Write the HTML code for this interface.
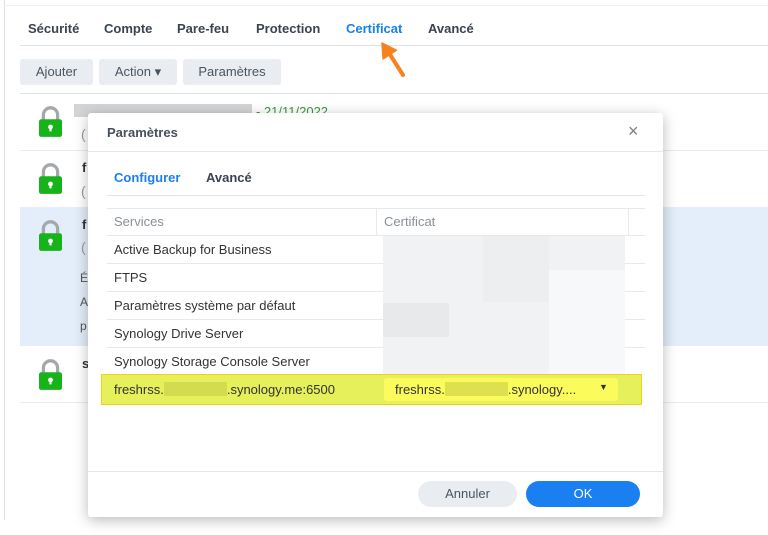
<!DOCTYPE html>
<html><head><meta charset="utf-8"><style>
*{box-sizing:border-box;margin:0;padding:0}
body{width:768px;height:535px;overflow:hidden;background:#fff;font-family:"Liberation Sans","DejaVu Sans",sans-serif;position:relative;color:#333}
.abs{position:absolute}
.tab{position:absolute;top:21px;font-size:13px;font-weight:bold;color:#3a4450}
.btn{position:absolute;top:59px;height:26px;background:#e9edf2;border-radius:3px;font-size:13px;color:#4a5460;line-height:26px;text-align:center}
.lock{position:absolute;left:39px;width:23px;height:31px}
.row{position:absolute;left:107px;width:538px;height:28px;border-bottom:1px solid #e6eaee;font-size:13px;color:#333;line-height:28px;padding-left:7px}
.par{position:absolute;left:81px;font-size:14px;color:#999}
</style></head><body>
<div class="abs" style="left:4px;top:0;width:1px;height:520px;background:#dde2e8"></div>
<div class="abs" style="left:4px;top:5px;width:764px;height:1px;background:#eef1f4"></div>
<div class="tab" style="left:28px">Sécurité</div>
<div class="tab" style="left:104px">Compte</div>
<div class="tab" style="left:177px">Pare-feu</div>
<div class="tab" style="left:256px">Protection</div>
<div class="tab" style="left:346px;color:#1a7ff0">Certificat</div>
<div class="tab" style="left:428px">Avancé</div>
<div class="abs" style="left:20px;top:45px;width:748px;height:1px;background:#dde3ea"></div>
<svg class="abs" style="left:376px;top:40px" width="34" height="40"><polygon points="6,3 20.3,10.2 7.1,19" fill="#f6821f" stroke="#f6821f" stroke-width="1.5" stroke-linejoin="round"/><line x1="13" y1="13" x2="27" y2="35" stroke="#f6821f" stroke-width="4" stroke-linecap="round"/></svg>
<div class="btn" style="left:20px;width:73px">Ajouter</div>
<div class="btn" style="left:99px;width:78px">Action ▾</div>
<div class="btn" style="left:183px;width:98px">Paramètres</div>
<div class="abs" style="left:20px;top:93px;width:748px;height:1px;background:#dde3ea"></div>
<div class="abs" style="left:20px;top:150px;width:748px;height:1px;background:#e8ecf0"></div>
<div class="abs" style="left:20px;top:207px;width:748px;height:139px;background:#e3eefa"></div>
<div class="abs" style="left:20px;top:402px;width:748px;height:1px;background:#e8ecf0"></div>
<div class="abs" style="left:74px;top:104px;width:178px;height:13px;background:#d2d4d6"></div>
<div class="abs" style="left:256px;top:104px;font-size:13px;color:#3a9a3a">- 21/11/2022</div>
<div class="par" style="top:126px">(</div>
<div class="par" style="top:183px">(</div>
<div class="par" style="top:239px">(</div>
<div class="abs" style="left:82px;top:160px;font-size:13px;font-weight:bold">f</div>
<div class="abs" style="left:82px;top:217px;font-size:13px;font-weight:bold">f</div>
<div class="abs" style="left:80px;top:266px;font-size:12px;color:#555;line-height:24px">É<br>A<br>p</div>
<div class="abs" style="left:82px;top:356px;font-size:13px;font-weight:bold">s</div>
<svg class="lock" style="top:106px" viewBox="0 0 21 28"><path d="M4 13 V8 a6.5 6.5 0 0 1 13 0 V13" fill="none" stroke="#a4a8ac" stroke-width="3"/><rect x="0" y="12" width="21" height="16" rx="2" fill="#17b31a"/><circle cx="10.5" cy="19" r="2.2" fill="#fff"/><rect x="9.5" y="19" width="2" height="4" fill="#fff"/></svg>
<svg class="lock" style="top:163px" viewBox="0 0 21 28"><path d="M4 13 V8 a6.5 6.5 0 0 1 13 0 V13" fill="none" stroke="#a4a8ac" stroke-width="3"/><rect x="0" y="12" width="21" height="16" rx="2" fill="#17b31a"/><circle cx="10.5" cy="19" r="2.2" fill="#fff"/><rect x="9.5" y="19" width="2" height="4" fill="#fff"/></svg>
<svg class="lock" style="top:220px" viewBox="0 0 21 28"><path d="M4 13 V8 a6.5 6.5 0 0 1 13 0 V13" fill="none" stroke="#a4a8ac" stroke-width="3"/><rect x="0" y="12" width="21" height="16" rx="2" fill="#17b31a"/><circle cx="10.5" cy="19" r="2.2" fill="#fff"/><rect x="9.5" y="19" width="2" height="4" fill="#fff"/></svg>
<svg class="lock" style="top:359px" viewBox="0 0 21 28"><path d="M4 13 V8 a6.5 6.5 0 0 1 13 0 V13" fill="none" stroke="#a4a8ac" stroke-width="3"/><rect x="0" y="12" width="21" height="16" rx="2" fill="#17b31a"/><circle cx="10.5" cy="19" r="2.2" fill="#fff"/><rect x="9.5" y="19" width="2" height="4" fill="#fff"/></svg>

<div class="abs" style="left:88px;top:113px;width:575px;height:404px;background:#fff;border-radius:3px;box-shadow:0 3px 14px rgba(0,0,0,.28)"></div>
<div class="abs" style="left:107px;top:125px;font-size:13px;font-weight:bold;color:#47505a">Paramètres</div>
<div class="abs" style="left:628px;top:121px;font-size:18px;color:#7a8088">×</div>
<div class="abs" style="left:88px;top:151px;width:575px;height:1px;background:#e3e8ee"></div>
<div class="abs" style="left:114px;top:170px;font-size:13px;font-weight:bold;color:#1a7ff0">Configurer</div>
<div class="abs" style="left:206px;top:170px;font-size:13px;font-weight:bold;color:#3a4450">Avancé</div>
<div class="abs" style="left:107px;top:195px;width:538px;height:1px;background:#dde3ea"></div>
<div class="abs" style="left:107px;top:208px;width:538px;height:28px;border-top:1px solid #e6eaee;border-bottom:1px solid #e6eaee;font-size:13px;color:#8a9098;line-height:26px;padding-left:7px">Services</div>
<div class="abs" style="left:376px;top:208px;width:1px;height:28px;background:#e6eaee"></div>
<div class="abs" style="left:628px;top:208px;width:1px;height:28px;background:#e6eaee"></div>
<div class="abs" style="left:384px;top:208px;font-size:13px;color:#8a9098;line-height:28px">Certificat</div>
<div class="row" style="top:236px">Active Backup for Business</div>
<div class="row" style="top:264px">FTPS</div>
<div class="row" style="top:292px">Paramètres système par défaut</div>
<div class="row" style="top:320px">Synology Drive Server</div>
<div class="row" style="top:348px;border-bottom:none">Synology Storage Console Server</div>
<div class="abs" style="left:383px;top:236px;width:242px;height:138px;background:#f1f2f4"></div>
<div class="abs" style="left:383px;top:303px;width:66px;height:34px;background:#e8e9eb"></div>
<div class="abs" style="left:483px;top:236px;width:66px;height:66px;background:#eceef0"></div>
<div class="abs" style="left:549px;top:270px;width:76px;height:104px;background:#f7f8f9"></div>
<div class="abs" style="left:101px;top:374px;width:541px;height:31px;background:#e5f05a;border:1.5px solid #f3cf1c"></div>
<div class="abs" style="left:114px;top:382px;font-size:13px;color:#333">freshrss.<span style="display:inline-block;width:63px;height:14px;background:#d3dc4e;vertical-align:-2px"></span>.synology.me:6500</div>
<div class="abs" style="left:384px;top:378px;width:234px;height:23px;background:#fbfb5c;border-radius:3px"></div>
<div class="abs" style="left:395px;top:382px;font-size:13px;color:#333">freshrss.<span style="display:inline-block;width:63px;height:14px;background:#dfe04e;vertical-align:-2px"></span>.synology....</div>
<div class="abs" style="left:599px;top:382px;font-size:9px;color:#333">▼</div>
<div class="abs" style="left:88px;top:471px;width:575px;height:1px;background:#e3e8ee"></div>
<div class="abs" style="left:418px;top:481px;width:99px;height:26px;background:#e9edf2;border-radius:13px;font-size:13px;color:#4a5460;line-height:26px;text-align:center">Annuler</div>
<div class="abs" style="left:526px;top:481px;width:114px;height:26px;background:#1a7ff0;border-radius:13px;font-size:13px;color:#fff;line-height:26px;text-align:center">OK</div>
</body></html>
